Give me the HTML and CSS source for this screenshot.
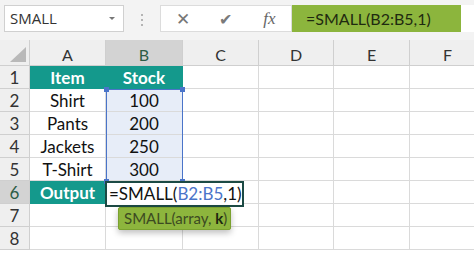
FILE: index.html
```html
<!DOCTYPE html>
<html>
<head>
<meta charset="utf-8">
<title>SMALL</title>
<link rel="stylesheet" href="styles.css">
</head>
<body>
<div class="bar">
  <div class="namebox">SMALL<span class="drop"></span></div>
  <div class="dots"><i></i><i></i><i></i></div>
  <div class="btns">
    <span class="btn">&#x2715;</span>
    <span class="btn ok">&#x2714;</span>
    <span class="btn fx">fx</span>
  </div>
  <div class="formula">=SMALL(B2:B5,1)</div>
  <div class="rest"></div>
</div>
<div class="sheet">
  <div class="grid">
    <div class="corner"><span></span></div>
    <div class="ch">A</div><div class="ch on">B</div><div class="ch">C</div><div class="ch">D</div><div class="ch">E</div><div class="ch">F</div>

    <div class="rh">1</div><div class="c hd">Item</div><div class="c hd">Stock</div><div class="c"></div><div class="c"></div><div class="c"></div><div class="c"></div>
    <div class="rh">2</div><div class="c">Shirt</div><div class="c sel">100</div><div class="c"></div><div class="c"></div><div class="c"></div><div class="c"></div>
    <div class="rh">3</div><div class="c">Pants</div><div class="c sel">200</div><div class="c"></div><div class="c"></div><div class="c"></div><div class="c"></div>
    <div class="rh">4</div><div class="c">Jackets</div><div class="c sel">250</div><div class="c"></div><div class="c"></div><div class="c"></div><div class="c"></div>
    <div class="rh">5</div><div class="c">T-Shirt</div><div class="c sel">300</div><div class="c"></div><div class="c"></div><div class="c"></div><div class="c"></div>
    <div class="rh on">6</div><div class="c hd">Output</div><div class="c"></div><div class="c"></div><div class="c"></div><div class="c"></div><div class="c"></div>
    <div class="rh">7</div><div class="c"></div><div class="c"></div><div class="c"></div><div class="c"></div><div class="c"></div><div class="c"></div>
    <div class="rh">8</div><div class="c"></div><div class="c"></div><div class="c"></div><div class="c"></div><div class="c"></div><div class="c"></div>
  </div>
  <div class="range"><b class="h tl"></b><b class="h tr"></b><b class="h bl"></b><b class="h br"></b></div>
  <div class="edit">=SMALL(<span class="ref">B2:B5</span>,1)</div>
  <div class="tip">SMALL(array, <b>k</b>)</div>
</div>
</body>
</html>
```

FILE: styles.css
```css
body{margin:0;width:474px;height:253px;overflow:hidden;background:#fff;font-family:'Open Sans','Noto Sans',sans-serif;color:#222}

/* formula bar */
.bar{display:flex;align-items:flex-start;height:40px;padding-top:5px;box-sizing:border-box;background:#f3f3f3}
.namebox{position:relative;margin-left:4px;width:120px;height:27px;box-sizing:border-box;border:1px solid #d0d0d0;background:#fff;font-size:15px;line-height:25px;padding-left:5px;color:#333}
.drop{position:absolute;right:8px;top:11px;border:3px solid transparent;border-top:3px solid #777;border-bottom:0}
.dots{display:flex;flex-direction:column;gap:3px;width:36px;align-items:center;padding-top:9px}
.dots i{display:block;width:2px;height:2px;background:#b4b4b4}
.btns{display:flex;width:132px;height:27px;background:#fff;border:1px solid #dcdcdc;box-sizing:border-box;align-items:center}
.btn{flex:1;text-align:center;color:#777;font-size:17px}
.btn.ok{color:#7a7a7a;font-size:16px}
.fx{font-family:'Liberation Serif',serif;font-style:italic;font-size:17px;color:#666}
.formula{width:169px;height:27px;background:#8cb53d;font-size:16px;line-height:27px;padding-left:14px;box-sizing:border-box;color:#1f2a10;font-family:'Lato','Open Sans',sans-serif}
.rest{flex:1;height:27px;background:#fff}

/* sheet */
.sheet{position:relative;font-family:'Lato','Open Sans',sans-serif}
.grid{display:grid;grid-template-columns:30px 76px 77px 76px 75px 76px 76px;grid-template-rows:26px repeat(8,23px)}
.corner,.ch,.rh{background:#efefef;color:#333;font-size:16px;border-right:1px solid #cfcfcf;border-bottom:1px solid #cfcfcf;box-sizing:border-box;display:flex;align-items:center;justify-content:center}
.corner{position:relative}
.corner span{position:absolute;right:3px;bottom:3px;border-style:solid;border-width:0 0 15px 16px;border-color:transparent transparent #b9b9b9 transparent}
.ch{padding-top:3px}
.ch.on{background:#d3d3d3;color:#2d5d46}
.rh{font-size:17px}
.rh.on{background:#d3d3d3;color:#2d5d46}
.c{border-right:1px solid #dadada;border-bottom:1px solid #dadada;box-sizing:border-box;font-size:17px;display:flex;align-items:center;justify-content:center;color:#111}
.c.hd{background:#14998c;color:#fff;font-weight:bold;border-color:#14998c}
.c.sel{background:#e7edf8}

/* overlays */
.range{position:absolute;left:106px;top:49px;width:77px;height:93px;box-sizing:border-box;border:1px solid #4a74c9}
.h{position:absolute;width:5px;height:5px;background:#4a74c9}
.tl{left:-3px;top:-3px}.tr{right:-3px;top:-3px}.bl{left:-3px;bottom:-3px}.br{right:-3px;bottom:-3px}
.edit{position:absolute;left:105px;top:141px;width:139px;height:26px;box-sizing:border-box;border:2px solid #1c4a44;background:#fff;font-size:17px;line-height:22px;padding-left:2px;color:#111}
.ref{color:#4a74c9}
.tip{position:absolute;left:118px;top:167px;width:113px;height:23px;box-sizing:border-box;background:#8db53d;border:1px solid #7aa12f;border-radius:2px;font-size:15px;line-height:21px;padding-left:5px;color:#3c4a22;box-shadow:0 3px 6px rgba(0,0,0,.25)}
.tip b{color:#1d2810}
```
